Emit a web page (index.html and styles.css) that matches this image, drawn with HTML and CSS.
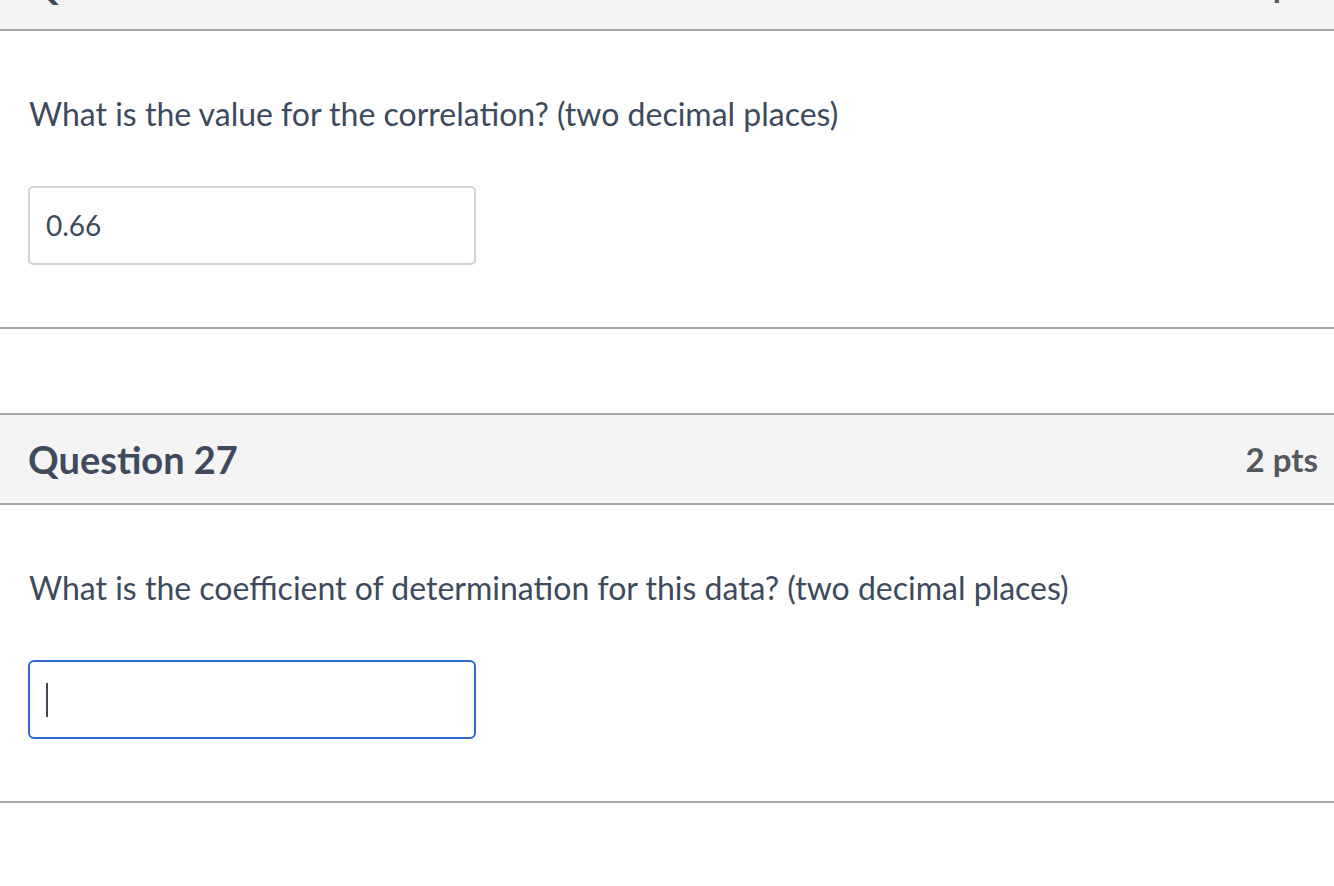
FILE: index.html
```html
<!DOCTYPE html>
<html lang="en">
<head>
<meta charset="utf-8">
<title>Quiz</title>
<link rel="stylesheet" href="styles.css">
</head>
<body>
<main class="quiz">
  <section class="question first">
    <header class="q-header">
      <h2 class="q-name">Question 26</h2>
      <span class="q-points">2 pts</span>
    </header>
    <div class="q-body">
      <p class="q-text">What is the value for the correlation? (two decimal places)</p>
      <div class="answer"><span class="answer-value">0.66</span></div>
    </div>
  </section>
  <section class="question">
    <header class="q-header">
      <h2 class="q-name">Question 27</h2>
      <span class="q-points">2 pts</span>
    </header>
    <div class="q-body">
      <p class="q-text">What is the coefficient of determination for this data? (two decimal places)</p>
      <div class="answer focused"><span class="caret"></span></div>
    </div>
  </section>
</main>
</body>
</html>
```
FILE: styles.css
```css
html, body {
  margin: 0;
  padding: 0;
  background: #ffffff;
}
body {
  font-family: Lato, "Open Sans", "Liberation Sans", sans-serif;
  color: #3d4a5c;
  overflow: hidden;
}
.quiz {
  display: flex;
  flex-direction: column;
  gap: 84px;
  margin-top: -61px;
}
.question {
  border-top: 2px solid #a6a6a6;
  border-bottom: 2px solid #a6a6a6;
}
.q-header {
  height: 88px;
  background: #f4f4f4;
  border-bottom: 2px solid #a6a6a6;
  display: flex;
  align-items: center;
  justify-content: space-between;
  padding: 0 16px 0 28px;
}
.q-name {
  margin: 0;
  font-size: 38px;
  font-weight: 700;
  color: #3f4b5d;
}
.q-points {
  font-size: 33px;
  font-weight: 700;
  color: #55585c;
}
.q-body {
  height: 296px;
  padding: 0 28px;
  box-sizing: border-box;
  display: flex;
  flex-direction: column;
}
.q-text {
  margin: 61px 0 0;
  font-size: 32px;
  line-height: 44px;
  padding-left: 1px;
}
.answer {
  margin-top: 50px;
  width: 448px;
  height: 79px;
  box-sizing: border-box;
  border: 2px solid #cfd3d6;
  border-radius: 5px;
  display: flex;
  align-items: center;
  padding-left: 16px;
  font-size: 28px;
  color: #3d4a5c;
}
.answer-value {
  margin-top: -1px;
}
.answer.focused {
  border: 2px solid #2e6bcb;
  border-radius: 6px;
}
.caret {
  display: block;
  width: 2px;
  height: 34px;
  background: #3f4656;
}
```
